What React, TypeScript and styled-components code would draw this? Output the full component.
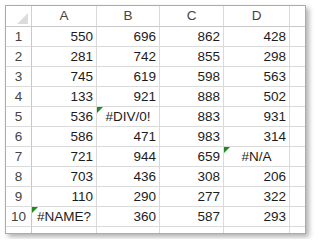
import React from 'react';
import styled, { createGlobalStyle } from 'styled-components';

type Value = number | string;

const columns = ['A', 'B', 'C', 'D'];

const rows: Value[][] = [
  [550, 696, 862, 428],
  [281, 742, 855, 298],
  [745, 619, 598, 563],
  [133, 921, 888, 502],
  [536, '#DIV/0!', 883, 931],
  [586, 471, 983, 314],
  [721, 944, 659, '#N/A'],
  [703, 436, 308, 206],
  [110, 290, 277, 322],
  ['#NAME?', 360, 587, 293],
];

const GlobalStyle = createGlobalStyle`
  html, body {
    margin: 0;
    background: #ffffff;
  }
  body {
    font-family: "Liberation Sans", Arial, sans-serif;
  }
`;

const App: React.FC = () => {
  return (
    <>
      <GlobalStyle />
      <Page>
        <Sheet>
          <Corner>
            <SelectAll />
          </Corner>
          {columns.map((col) => (
            <ColHeader key={col}>{col}</ColHeader>
          ))}
          <ColHeader $filler />

          {rows.map((row, r) => (
            <React.Fragment key={r}>
              <RowHeader>{r + 1}</RowHeader>
              {row.map((value, c) => {
                const isError = typeof value === 'string';
                return (
                  <Cell key={c} $error={isError}>
                    {isError && <ErrorFlag />}
                    {value}
                  </Cell>
                );
              })}
              <Cell $filler />
            </React.Fragment>
          ))}

          <RowHeader $tail />
          {columns.map((col) => (
            <Cell key={col} $tail />
          ))}
          <Cell $tail $filler />
        </Sheet>
      </Page>
    </>
  );
};

export default App;

const Page = styled.div`
  padding: 5px;
`;

const Sheet = styled.div`
  display: grid;
  grid-template-columns: 26px 65px 63px 64px 66px 15px;
  grid-template-rows: 21px repeat(10, 20px) 6px;
  width: max-content;
  border: 1px solid #ababab;
  background: #ffffff;
  box-shadow: 3px 3px 5px rgba(0, 0, 0, 0.3);
  font-size: 13.5px;
`;

const Corner = styled.div`
  position: relative;
  box-sizing: border-box;
  border-right: 1px solid #d0d0d0;
  border-bottom: 1px solid #c8c8c8;
`;

const SelectAll = styled.div`
  position: absolute;
  right: 3px;
  bottom: 2px;
  width: 11px;
  height: 11px;
  background: #dcdcdc;
  clip-path: polygon(100% 0, 100% 100%, 0 100%);
`;

const ColHeader = styled.div<{ $filler?: boolean }>`
  box-sizing: border-box;
  display: flex;
  align-items: center;
  justify-content: center;
  border-right: ${(p) => (p.$filler ? 'none' : '1px solid #dadada')};
  border-bottom: 1px solid #c8c8c8;
  color: #444444;
  line-height: 20px;
`;

const RowHeader = styled.div<{ $tail?: boolean }>`
  box-sizing: border-box;
  display: flex;
  align-items: center;
  justify-content: center;
  border-right: 1px solid #c8c8c8;
  border-bottom: ${(p) => (p.$tail ? 'none' : '1px solid #dadada')};
  color: #444444;
  line-height: 19px;
`;

const Cell = styled.div<{ $error?: boolean; $filler?: boolean; $tail?: boolean }>`
  position: relative;
  box-sizing: border-box;
  display: flex;
  align-items: center;
  justify-content: ${(p) => (p.$error ? 'center' : 'flex-end')};
  padding: 0 3px;
  border-right: ${(p) => (p.$filler ? 'none' : '1px solid #dadada')};
  border-bottom: ${(p) => (p.$tail ? 'none' : '1px solid #dadada')};
  color: #1c1c1c;
  line-height: 19px;
  white-space: nowrap;
`;

const ErrorFlag = styled.span`
  position: absolute;
  left: 0;
  top: 0;
  width: 6px;
  height: 6px;
  background: #1f8a1f;
  clip-path: polygon(0 0, 100% 0, 0 100%);
`;
